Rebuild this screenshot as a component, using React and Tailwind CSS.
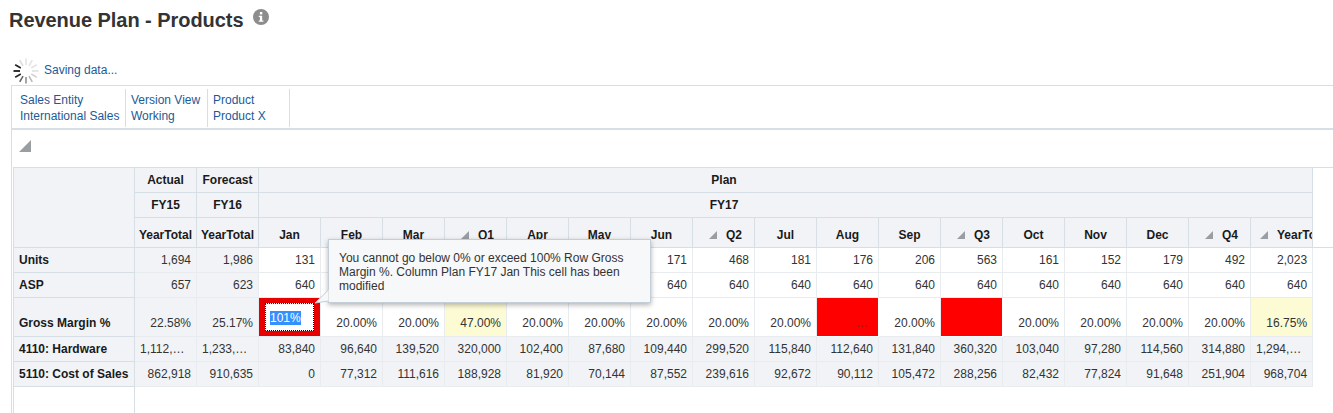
import React from "react";

const months = ["Jan","Feb","Mar","Q1","Apr","May","Jun","Q2","Jul","Aug","Sep","Q3","Oct","Nov","Dec","Q4","YearTotal"];
const expandable = { Q1: "pl-[16px]", Q2: "pl-[16px]", Q3: "pl-[16px]", Q4: "pl-[16px]", YearTotal: "pl-[9px]" };

const rows = [
  { label: "Units", shaded: false, values: ["1,694","1,986","131","151","218","500","160","137","171","468","181","176","206","563","161","152","179","492","2,023"] },
  { label: "ASP", shaded: false, values: ["657","623","640","640","640","640","640","640","640","640","640","640","640","640","640","640","640","640","640"] },
  { label: "Gross Margin %", shaded: false, tall: true, values: ["22.58%","25.17%","@input","20.00%","20.00%","@y47.00%","20.00%","20.00%","20.00%","20.00%","20.00%","@red…","20.00%","@red","20.00%","20.00%","20.00%","20.00%","@y16.75%"] },
  { label: "4110: Hardware", shaded: true, values: ["<1,112,…","<1,233,…","83,840","96,640","139,520","320,000","102,400","87,680","109,440","299,520","115,840","112,640","131,840","360,320","103,040","97,280","114,560","314,880","<1,294,…"] },
  { label: "5110: Cost of Sales", shaded: true, values: ["862,918","910,635","0","77,312","111,616","188,928","81,920","70,144","87,552","239,616","92,672","90,112","105,472","288,256","82,432","77,824","91,648","251,904","968,704"] },
];

const HEAD = "bg-[#f1f3f7] border-r border-b border-[#d6dfe6] p-0 text-center font-bold text-[12px] leading-[24px] text-[#1a1a1a] whitespace-nowrap overflow-hidden";

function Tri({ className }) {
  return (
    <svg viewBox="0 0 8 8" className={className}>
      <polygon points="8,0 8,8 0,8" fill="#9a9da1" />
    </svg>
  );
}

function Spinner() {
  const ticks = [];
  const shades = ["#e4e4e4","#e4e4e4","#e4e4e4","#e0e0e0","#d4d4d4","#b8b8b8","#909090","#686868","#282828","#000000","#202020","#dcdcdc"];
  for (let i = 0; i < 12; i++) {
    const a = (i * 30 * Math.PI) / 180;
    const s = Math.sin(a), c = -Math.cos(a);
    ticks.push(
      <line key={i} x1={13 + s * 6} y1={13 + c * 6} x2={13 + s * 12.5} y2={13 + c * 12.5} stroke={shades[i]} strokeWidth="1.6" />
    );
  }
  return <svg viewBox="0 0 26 26" className="w-[26px] h-[26px] shrink-0">{ticks}</svg>;
}

function Crumb({ a, b, className }) {
  return (
    <div className={"h-[38px] pt-[3px] border-r border-[#d6dfe6] leading-[16px] " + className}>
      <div>{a}</div>
      <div>{b}</div>
    </div>
  );
}

function BodyCell({ v, gray, tall }) {
  const base = "border-r border-b border-[#e9ecef] p-0 text-[12px] text-[#333333] overflow-hidden whitespace-nowrap " + (tall ? "align-bottom leading-[25px] " : "leading-[24px] ");
  const bg = gray ? "bg-[#f1f3f7] " : "bg-white ";
  if (v === "@input") {
    return (
      <td className="bg-[#e60000] border-b border-r border-[#e9ecef] p-0 align-middle">
        <div className="mx-[6px] my-[1px] h-[28px] bg-white border border-dotted border-black flex items-center pl-[4px] pt-[1px]">
          <span className="bg-[#3390ff] text-white text-[12px] leading-[14px]">101%</span>
        </div>
      </td>
    );
  }
  if (v.startsWith("@red")) {
    return <td className="bg-[#ff0000] border-r border-b border-white p-0 pr-[10px] text-right align-bottom leading-[25px] text-[12px] text-[#a01010]">{v.slice(4)}</td>;
  }
  if (v.startsWith("@y")) {
    return <td className={base + "bg-[#fdfbd4] text-right pr-[5px]"}>{v.slice(2)}</td>;
  }
  if (v.startsWith("<")) {
    return <td className={base + bg + "text-left pl-[5px]"}>{v.slice(1)}</td>;
  }
  return <td className={base + bg + "text-right pr-[5px]"}>{v}</td>;
}

export default function App() {
  return (
    <div className="relative w-[1333px] h-[413px] overflow-hidden bg-white font-['Liberation_Sans',Arial,sans-serif] text-[12px]">
      <div className="h-[58px] pl-[9px] pt-[8px] flex items-start gap-[10px]">
        <h1 className="font-bold text-[20px] leading-[24px] tracking-[-0.05px] text-[#333333]">Revenue Plan - Products</h1>
        <svg viewBox="0 0 16 16" className="w-[16px] h-[16px] mt-[1px]">
          <circle cx="8" cy="8" r="8" fill="#8c8c8c" />
          <rect x="6.9" y="3" width="2.4" height="2.4" fill="#fff" />
          <path d="M5.8 6.7h3.4v4.7h1.2v1.4H5.8v-1.4h1.1V8.1H5.8z" fill="#fff" />
        </svg>
      </div>

      <div className="h-[27px] pl-[13px] flex items-start gap-[5px] text-[#1c5a96] leading-[24px]">
        <Spinner />
        <span>Saving data...</span>
      </div>

      <div className="ml-[11px] border-l border-t border-b-2 border-[#d6dfe6] h-[45px] pt-[3px] flex text-[#1c5a96]">
        <Crumb a="Sales Entity" b="International Sales" className="w-[114px] pl-[8px]" />
        <Crumb a="Version View" b="Working" className="w-[82px] pl-[5px]" />
        <Crumb a="Product" b="Product X" className="w-[82px] pl-[5px]" />
      </div>

      <div className="ml-[11px] border-l border-[#d6dfe6] pl-[1px]">
        <div className="h-[37px] pl-[6px] pt-[10px]">
          <Tri className="w-[12px] h-[12px]" />
        </div>
        <div className="border-t border-[#d6dfe6]">
          <table className="table-fixed border-separate border-spacing-0 w-[1320px]">
            <colgroup>
              <col className="w-[122px]" />
              {Array.from({ length: 19 }, (_, i) => <col key={i} className="w-[62px]" />)}
              <col className="w-[20px]" />
            </colgroup>
            <thead>
              <tr className="h-[25px]">
                <th rowSpan={3} className={HEAD + " border-l"}></th>
                <th className={HEAD}>Actual</th>
                <th className={HEAD}>Forecast</th>
                <th colSpan={17} className={HEAD + " pr-[123px]"}>Plan</th>
                <th className="p-0"></th>
              </tr>
              <tr className="h-[25px]">
                <th className={HEAD}>FY15</th>
                <th className={HEAD}>FY16</th>
                <th colSpan={17} className={HEAD + " pr-[123px]"}>FY17</th>
                <th className="p-0"></th>
              </tr>
              <tr className="h-[30px]">
                <th className={HEAD + " align-bottom"}>YearTotal</th>
                <th className={HEAD + " align-bottom"}>YearTotal</th>
                {months.map((m) => (
                  <th key={m} className={HEAD + " align-bottom"}>
                    {expandable[m] ? (
                      <div className={"flex items-center gap-[9px] " + expandable[m]}>
                        <Tri className="w-[8px] h-[8px] shrink-0" />
                        <span>{m}</span>
                      </div>
                    ) : m}
                  </th>
                ))}
                <th className="p-0 border-b border-[#d6dfe6]"></th>
              </tr>
            </thead>
            <tbody>
              {rows.map((r) => (
                <tr key={r.label} className={r.tall ? "h-[39px]" : "h-[25px]"}>
                  <th className={"bg-[#f1f3f7] border-l border-r border-b border-[#d6dfe6] p-0 pl-[5px] text-left font-bold text-[12px] text-[#1a1a1a] whitespace-nowrap " + (r.tall ? "align-bottom leading-[25px]" : "leading-[24px]")}>
                    {r.label}
                  </th>
                  {r.values.map((v, i) => (
                    <BodyCell key={i} v={v} gray={r.shaded || i < 2} tall={r.tall} />
                  ))}
                  <td className="p-0"></td>
                </tr>
              ))}
              <tr className="h-[30px]">
                <td className="border-l border-r border-[#d6dfe6] p-0"></td>
                <td colSpan={20} className="p-0"></td>
              </tr>
            </tbody>
          </table>
        </div>
      </div>

      <div className="absolute left-[328px] top-[239px] w-[323px] h-[64px] bg-[#f7f8f9] border border-[#c4ced7] shadow-[0_2px_5px_rgba(0,0,0,0.3)] pl-[10px] pr-[14px] pt-[11px] text-[12px] leading-[14px] text-[#333333]">
        You cannot go below 0% or exceed 100% Row Gross Margin %. Column Plan FY17 Jan This cell has been modified
      </div>
      <svg viewBox="0 0 16 16" className="absolute left-[314px] top-[289px] w-[16px] h-[16px]">
        <polygon points="14.5,1 1,14 14.5,12" fill="#f7f8f9" stroke="#c4ced7" strokeWidth="1" />
        <rect x="14.5" y="1" width="1.5" height="11" fill="#f7f8f9" />
      </svg>
    </div>
  );
}
